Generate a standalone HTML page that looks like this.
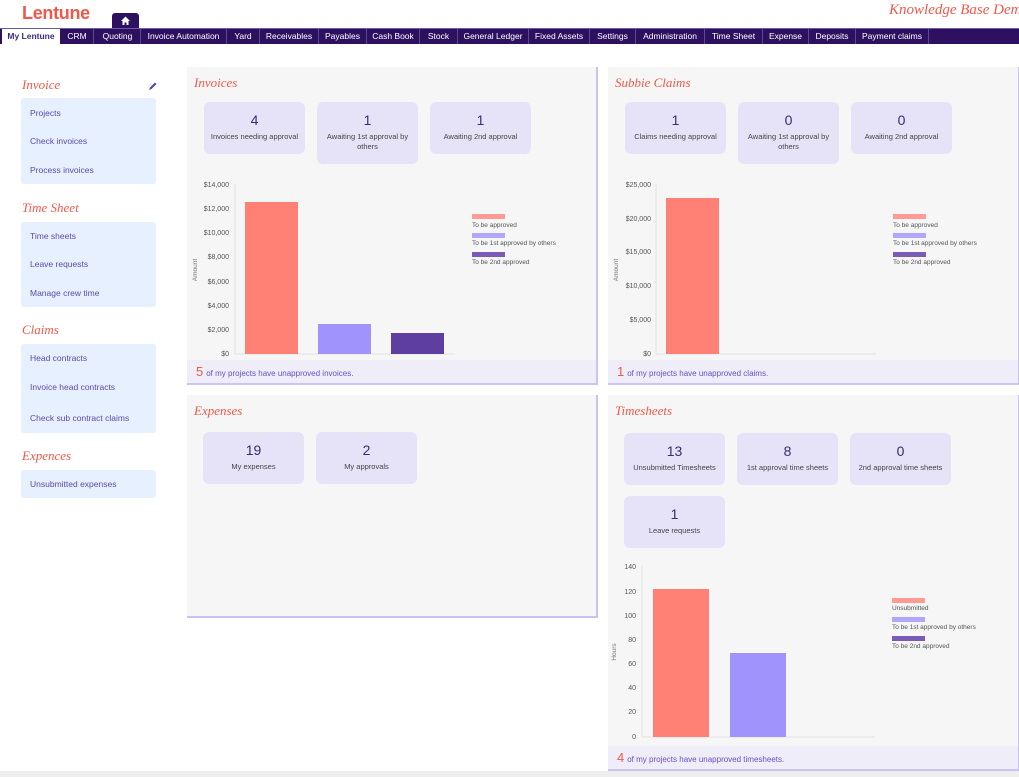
<!DOCTYPE html>
<html><head><meta charset="utf-8"><style>
*{margin:0;padding:0;box-sizing:border-box}
body{width:1019px;height:777px;position:relative;background:#fff;font-family:"Liberation Sans",sans-serif;overflow:hidden;color:#333}
.a{position:absolute}
.logo{left:22px;top:3px;font-size:18px;font-weight:bold;color:#f0584a;letter-spacing:-0.3px}
.kb{right:-10px;top:2px;font-family:"Liberation Serif",serif;font-style:italic;font-size:15px;color:#f0584a;white-space:nowrap}
.home{left:112px;top:13px;width:27px;height:16px;background:#2d1160;border-radius:3px 3px 0 0}
.nav{left:0;top:28px;width:1019px;height:16px;background:#2d1160;border-top:1px solid #6d5aa0}
.tab{position:absolute;top:0;height:15px;font-size:8.5px;color:#fff;text-align:center;line-height:15px;border-right:1px solid #5b4b86}
.tab.on{background:#fff;color:#3d2a80;font-weight:bold;border:none}
.h{font-family:"Liberation Serif",serif;font-style:italic;color:#f0584a;font-size:13px}
.menu{background:#e6f0fe;border-radius:3px;left:21px;width:135px}
.mi{position:absolute;left:9px;font-size:8.5px;color:#5b4bae}
.panel{background:#f6f6f6;border-right:2px solid #cbc3f3;border-bottom:2px solid #cbc3f3}
.card{position:absolute;background:#e6e3f8;border-radius:6px;text-align:center;width:101px}
.card b{display:block;font-weight:normal;font-size:14px;color:#3a2c6e;margin-top:10px;line-height:16px}
.card span{display:block;font-size:7.5px;color:#444;margin-top:4px;line-height:10px;padding:0 6px}
.foot{position:absolute;left:0;right:0;bottom:0;height:23px;background:#efedf8;font-size:8px;color:#6a4fc8;padding-left:9px;line-height:23px}
.foot i{font-style:normal;color:#f0584a;font-size:13px;margin-right:3px}
</style></head><body>
<div class="a logo">Lentune</div>
<div class="a kb">Knowledge Base Demo</div>
<div class="a home"><svg width="27" height="16" viewBox="0 0 27 16"><path d="M13.5 3.5 L9 8 H10.5 V12 H12.5 V9.5 H14.5 V12 H16.5 V8 H18 Z" fill="#fff"/></svg></div>
<div class="a nav">
<div class="tab on" style="left:2px;width:58px">My Lentune</div>
<div class="tab" style="left:61px;width:33px">CRM</div>
<div class="tab" style="left:95px;width:46px">Quoting</div>
<div class="tab" style="left:141px;width:86px">Invoice Automation</div>
<div class="tab" style="left:227px;width:33px">Yard</div>
<div class="tab" style="left:260px;width:59px">Receivables</div>
<div class="tab" style="left:319px;width:48px">Payables</div>
<div class="tab" style="left:367px;width:53px">Cash Book</div>
<div class="tab" style="left:420px;width:38px">Stock</div>
<div class="tab" style="left:458px;width:71px">General Ledger</div>
<div class="tab" style="left:529px;width:61px">Fixed Assets</div>
<div class="tab" style="left:590px;width:46px">Settings</div>
<div class="tab" style="left:636px;width:69px">Administration</div>
<div class="tab" style="left:705px;width:58px">Time Sheet</div>
<div class="tab" style="left:763px;width:46px">Expense</div>
<div class="tab" style="left:809px;width:47px">Deposits</div>
<div class="tab" style="left:856px;width:73px">Payment claims</div>
</div>

<!-- sidebar -->
<div class="a h" style="left:22px;top:77px">Invoice</div>
<svg class="a" style="left:148px;top:81px" width="10" height="10" viewBox="0 0 10 10"><path d="M1 9 L2 6.5 L7 1.5 L8.5 3 L3.5 8 Z" fill="#5b3fb0"/></svg>
<div class="a menu" style="top:98px;height:86px"><div class="mi" style="top:10px">Projects</div><div class="mi" style="top:38px">Check invoices</div><div class="mi" style="top:67px">Process invoices</div></div>
<div class="a h" style="left:22px;top:200px">Time Sheet</div>
<div class="a menu" style="top:222px;height:85px"><div class="mi" style="top:9px">Time sheets</div><div class="mi" style="top:37px">Leave requests</div><div class="mi" style="top:66px">Manage crew time</div></div>
<div class="a h" style="left:22px;top:322px">Claims</div>
<div class="a menu" style="top:344px;height:89px"><div class="mi" style="top:9px">Head contracts</div><div class="mi" style="top:38px">Invoice head contracts</div><div class="mi" style="top:69px">Check sub contract claims</div></div>
<div class="a h" style="left:22px;top:448px">Expences</div>
<div class="a menu" style="top:470px;height:28px"><div class="mi" style="top:9px">Unsubmitted expenses</div></div>

<!-- panels -->
<div class="a panel" style="left:187px;top:67px;width:411px;height:318px">
<div class="a h" style="left:7px;top:8px">Invoices</div>
<div class="card" style="left:17px;top:35px;height:52px"><b>4</b><span>Invoices needing approval</span></div>
<div class="card" style="left:130px;top:35px;height:62px"><b>1</b><span>Awaiting 1st approval by others</span></div>
<div class="card" style="left:243px;top:35px;height:52px"><b>1</b><span>Awaiting 2nd approval</span></div>
<div class="foot"><i>5</i>of my projects have unapproved invoices.</div>
</div>
<div class="a panel" style="left:608px;top:67px;width:412px;height:318px">
<div class="a h" style="left:7px;top:8px">Subbie Claims</div>
<div class="card" style="left:17px;top:35px;height:52px"><b>1</b><span>Claims needing approval</span></div>
<div class="card" style="left:130px;top:35px;height:62px"><b>0</b><span>Awaiting 1st approval by others</span></div>
<div class="card" style="left:243px;top:35px;height:52px"><b>0</b><span>Awaiting 2nd approval</span></div>
<div class="foot"><i>1</i>of my projects have unapproved claims.</div>
</div>
<div class="a panel" style="left:187px;top:395px;width:411px;height:223px">
<div class="a h" style="left:7px;top:8px">Expenses</div>
<div class="card" style="left:16px;top:37px;height:52px"><b>19</b><span>My expenses</span></div>
<div class="card" style="left:129px;top:37px;height:52px"><b>2</b><span>My approvals</span></div>
</div>
<div class="a panel" style="left:608px;top:395px;width:412px;height:376px">
<div class="a h" style="left:7px;top:8px">Timesheets</div>
<div class="card" style="left:16px;top:38px;height:52px"><b>13</b><span>Unsubmitted Timesheets</span></div>
<div class="card" style="left:129px;top:38px;height:52px"><b>8</b><span>1st approval time sheets</span></div>
<div class="card" style="left:242px;top:38px;height:52px"><b>0</b><span>2nd approval time sheets</span></div>
<div class="card" style="left:16px;top:101px;height:52px"><b>1</b><span>Leave requests</span></div>
<div class="foot"><i>4</i>of my projects have unapproved timesheets.</div>
</div>
<div class="a" style="left:0;top:771px;width:1019px;height:6px;background:#eee"></div>

<svg class="a" style="left:0;top:0" width="1019" height="777" font-family="Liberation Sans,sans-serif" font-size="7" fill="#555">
<!-- invoices chart -->
<g text-anchor="end">
<text x="229" y="187">$14,000</text><text x="229" y="211">$12,000</text><text x="229" y="235">$10,000</text><text x="229" y="259">$8,000</text><text x="229" y="284">$6,000</text><text x="229" y="308">$4,000</text><text x="229" y="332">$2,000</text><text x="229" y="356">$0</text>
</g>
<text transform="translate(197,270) rotate(-90)" text-anchor="middle" font-size="6.5" fill="#777">Amount</text>
<line x1="235" y1="184" x2="235" y2="354" stroke="#e2e2e2"/><line x1="235" y1="354" x2="455" y2="354" stroke="#e2e2e2"/>
<rect x="245" y="202" width="53" height="152" fill="#ff8075"/>
<rect x="318" y="324" width="53" height="30" fill="#a093fc"/>
<rect x="391" y="333" width="53" height="21" fill="#5f3ea2"/>
<g font-size="6.5"><rect x="472" y="214" width="33" height="5" fill="#ff9b92"/><text x="472" y="227">To be approved</text>
<rect x="472" y="233" width="33" height="5" fill="#b0a6fc"/><text x="472" y="245">To be 1st approved by others</text>
<rect x="472" y="252" width="33" height="5" fill="#7a5cb8"/><text x="472" y="264">To be 2nd approved</text></g>
<!-- subbie chart -->
<g text-anchor="end">
<text x="651" y="187">$25,000</text><text x="651" y="221">$20,000</text><text x="651" y="254">$15,000</text><text x="651" y="288">$10,000</text><text x="651" y="322">$5,000</text><text x="651" y="356">$0</text>
</g>
<text transform="translate(618,270) rotate(-90)" text-anchor="middle" font-size="6.5" fill="#777">Amount</text>
<line x1="656" y1="184" x2="656" y2="354" stroke="#e2e2e2"/><line x1="656" y1="354" x2="876" y2="354" stroke="#e2e2e2"/>
<rect x="666" y="198" width="53" height="156" fill="#ff8075"/>
<g font-size="6.5"><rect x="893" y="214" width="33" height="5" fill="#ff9b92"/><text x="893" y="227">To be approved</text>
<rect x="893" y="233" width="33" height="5" fill="#b0a6fc"/><text x="893" y="245">To be 1st approved by others</text>
<rect x="893" y="252" width="33" height="5" fill="#7a5cb8"/><text x="893" y="264">To be 2nd approved</text></g>
<!-- timesheets chart -->
<g text-anchor="end">
<text x="636" y="569">140</text><text x="636" y="594">120</text><text x="636" y="618">100</text><text x="636" y="642">80</text><text x="636" y="666">60</text><text x="636" y="690">40</text><text x="636" y="714">20</text><text x="636" y="739">0</text>
</g>
<text transform="translate(616,652) rotate(-90)" text-anchor="middle" font-size="6.5" fill="#777">Hours</text>
<line x1="642" y1="566" x2="642" y2="737" stroke="#e2e2e2"/><line x1="642" y1="737" x2="875" y2="737" stroke="#e2e2e2"/>
<rect x="653" y="589" width="56" height="148" fill="#ff8075"/>
<rect x="730" y="653" width="56" height="84" fill="#a093fc"/>
<g font-size="6.5"><rect x="892" y="598" width="33" height="5" fill="#ff9b92"/><text x="892" y="610">Unsubmitted</text>
<rect x="892" y="617" width="33" height="5" fill="#b0a6fc"/><text x="892" y="629">To be 1st approved by others</text>
<rect x="892" y="636" width="33" height="5" fill="#7a5cb8"/><text x="892" y="648">To be 2nd approved</text></g>
</svg>
</body></html>
